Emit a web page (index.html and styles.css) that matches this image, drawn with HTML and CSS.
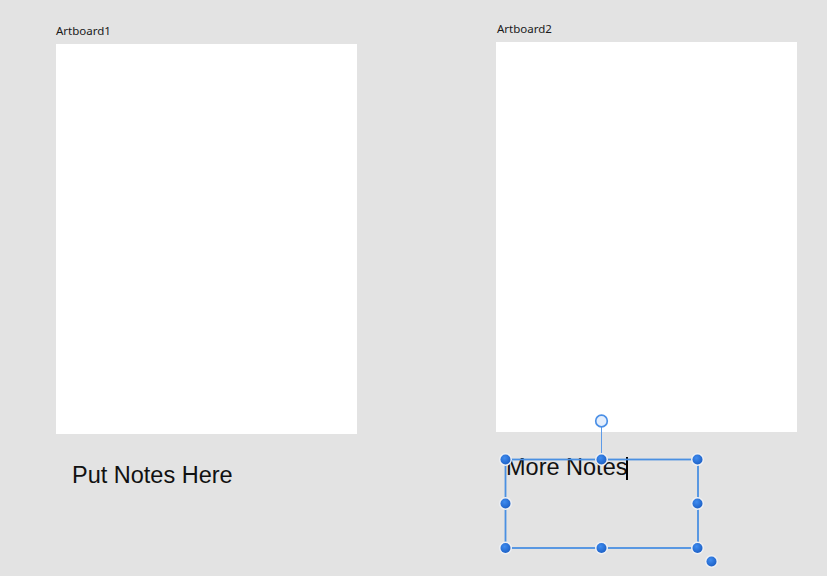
FILE: index.html
```html
<!DOCTYPE html>
<html>
<head>
<meta charset="utf-8">
<link rel="stylesheet" href="styles.css">
</head>
<body>
<div class="canvas">
  <div class="artboard ab1">
    <div class="ab-label">Artboard1</div>
    <div class="ab-page"></div>
  </div>
  <div class="artboard ab2">
    <div class="ab-label">Artboard2</div>
    <div class="ab-page"></div>
  </div>
  <div class="note note1">Put Notes Here</div>
  <div class="note note2">More Notes<span class="caret"></span></div>
  <svg class="selection" width="827" height="576" viewBox="0 0 827 576">
    <defs>
      <radialGradient id="hg" cx="40%" cy="35%" r="70%">
        <stop offset="0" stop-color="#3f8cf0"/>
        <stop offset="1" stop-color="#1c5fc4"/>
      </radialGradient>
    </defs>
    <line x1="601.5" y1="427" x2="601.5" y2="459" stroke="#5d9be8" stroke-width="1"/>
    <rect x="505.5" y="459.5" width="192.5" height="88.5" fill="none" stroke="#4a90e2" stroke-width="1.8"/>
    <circle cx="601.5" cy="421" r="5.8" fill="#e4eefc" stroke="#4a8fe6" stroke-width="1.7"/>
    <g>
      <circle cx="505.5" cy="459.5" r="6.5" fill="#eef0f4"/><circle cx="505.5" cy="459.5" r="5" fill="url(#hg)"/>
      <circle cx="601.5" cy="459.5" r="6.5" fill="#eef0f4"/><circle cx="601.5" cy="459.5" r="5" fill="url(#hg)"/>
      <circle cx="697.5" cy="459.5" r="6.5" fill="#eef0f4"/><circle cx="697.5" cy="459.5" r="5" fill="url(#hg)"/>
      <circle cx="505.5" cy="503.5" r="6.5" fill="#eef0f4"/><circle cx="505.5" cy="503.5" r="5" fill="url(#hg)"/>
      <circle cx="697.5" cy="503.5" r="6.5" fill="#eef0f4"/><circle cx="697.5" cy="503.5" r="5" fill="url(#hg)"/>
      <circle cx="505.5" cy="548" r="6.5" fill="#eef0f4"/><circle cx="505.5" cy="548" r="5" fill="url(#hg)"/>
      <circle cx="601.5" cy="548" r="6.5" fill="#eef0f4"/><circle cx="601.5" cy="548" r="5" fill="url(#hg)"/>
      <circle cx="697.5" cy="548" r="6.5" fill="#eef0f4"/><circle cx="697.5" cy="548" r="5" fill="url(#hg)"/>
      <circle cx="711.5" cy="561.5" r="6.5" fill="#eef0f4"/><circle cx="711.5" cy="561.5" r="5" fill="url(#hg)"/>
    </g>
  </svg>
</div>
</body>
</html>
```
FILE: styles.css
```css
html, body {
  margin: 0;
  padding: 0;
  background: #e3e3e3;
}
.canvas {
  position: relative;
  width: 827px;
  height: 576px;
  overflow: hidden;
  background: #e3e3e3;
}
.artboard {
  position: absolute;
  display: flex;
  flex-direction: column;
  gap: 8px;
}
.ab1 { left: 56px; top: 25px; }
.ab2 { left: 496px; top: 23px; }
.ab-label {
  font-family: "Noto Sans", "Open Sans", sans-serif;
  font-size: 11.5px;
  line-height: 11px;
  color: #1a1a1a;
}
.ab2 .ab-label { padding-left: 1px; }
.ab-page {
  width: 301px;
  height: 390px;
  background: #ffffff;
}
.note {
  position: absolute;
  font-family: "Liberation Sans", Arial, sans-serif;
  font-size: 23.5px;
  line-height: 23.5px;
  color: #111111;
  white-space: nowrap;
}
.note1 { left: 72px; top: 464px; }
.note2 { left: 506px; top: 456px; }
.caret {
  display: inline-block;
  width: 1.5px;
  height: 23px;
  background: #000;
  vertical-align: -5px;
  margin-left: -1px;
}
.selection {
  position: absolute;
  left: 0;
  top: 0;
}
```
